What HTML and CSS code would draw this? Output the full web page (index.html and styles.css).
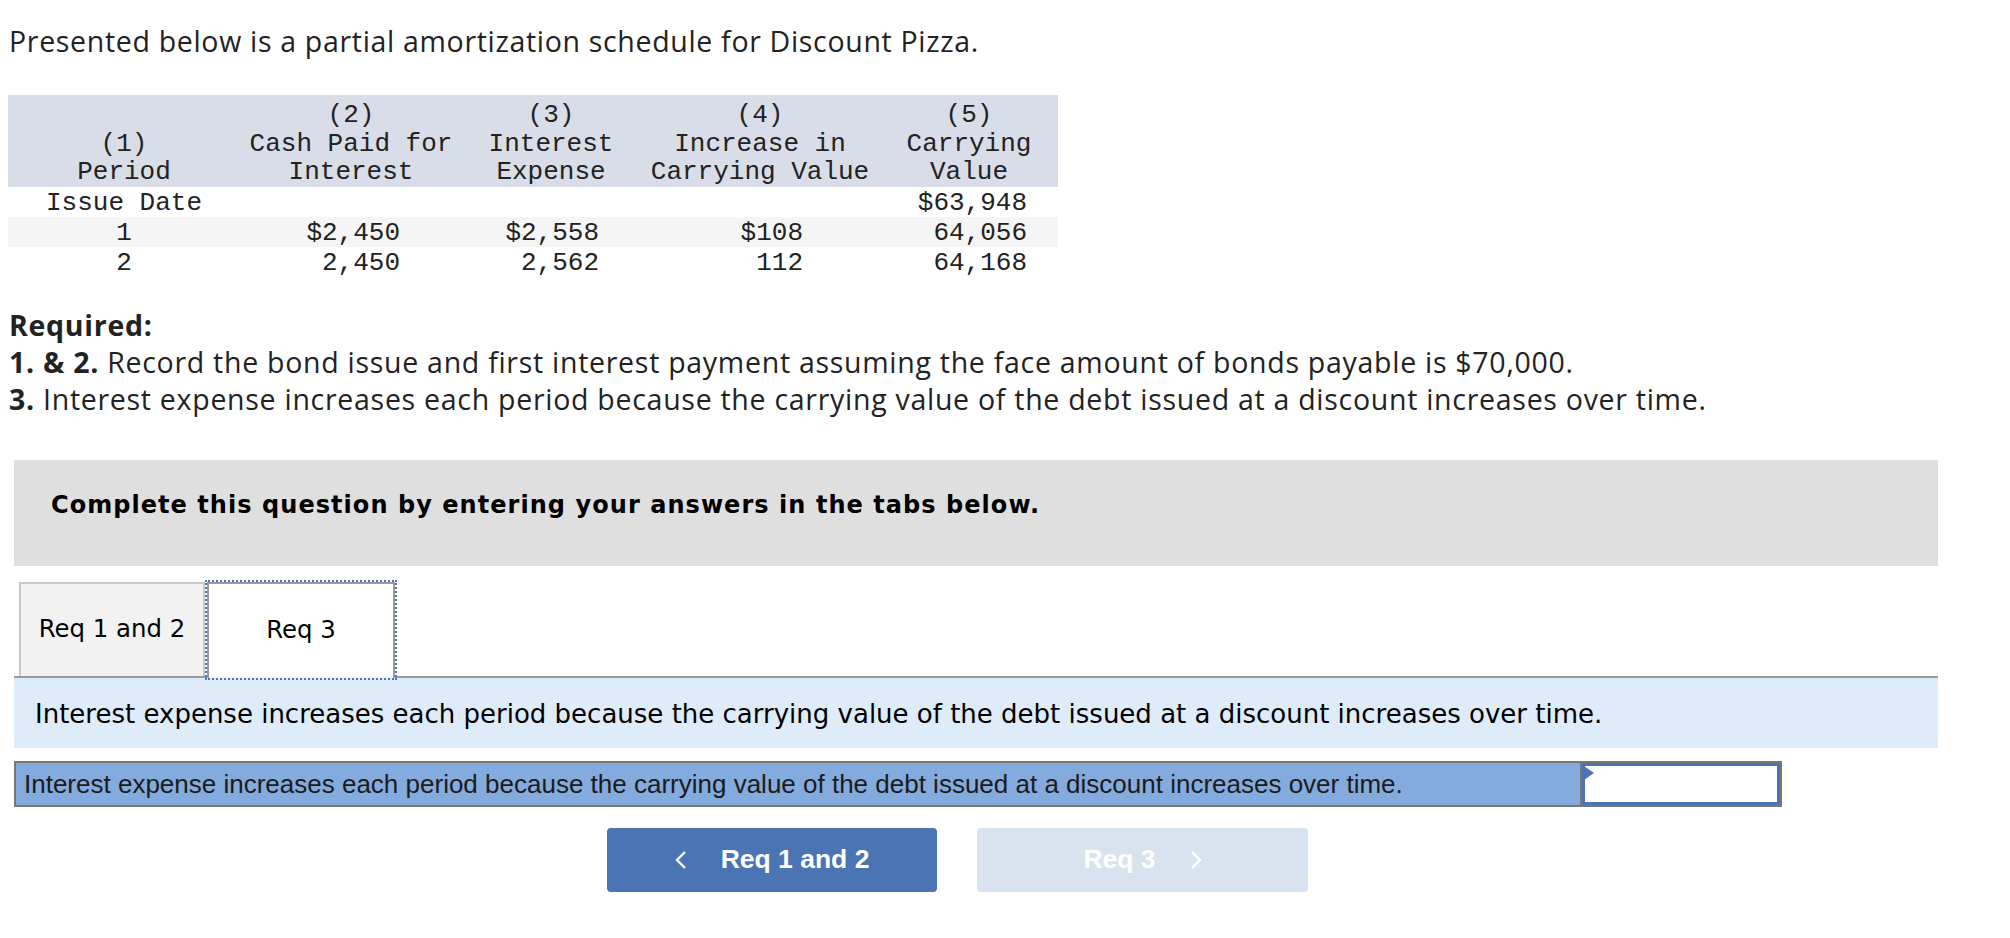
FILE: index.html
```html
<!DOCTYPE html>
<html>
<head>
<meta charset="utf-8">
<link rel="stylesheet" href="styles.css">
</head>
<body>
<div class="page">
  <p class="intro">Presented below is a partial amortization schedule for Discount Pizza.</p>

  <table class="sched">
    <colgroup>
      <col class="w1"><col class="w2"><col class="w3"><col class="w4"><col class="w5">
    </colgroup>
    <thead>
      <tr>
        <th>(1)<br>Period</th>
        <th>(2)<br>Cash Paid for<br>Interest</th>
        <th>(3)<br>Interest<br>Expense</th>
        <th>(4)<br>Increase in<br>Carrying Value</th>
        <th>(5)<br>Carrying<br>Value</th>
      </tr>
    </thead>
    <tbody>
      <tr>
        <td class="c1">Issue Date</td>
        <td class="c2"></td>
        <td class="c3"></td>
        <td class="c4"></td>
        <td class="c5">$63,948</td>
      </tr>
      <tr class="stripe">
        <td class="c1">1</td>
        <td class="c2">$2,450</td>
        <td class="c3">$2,558</td>
        <td class="c4">$108</td>
        <td class="c5">64,056</td>
      </tr>
      <tr>
        <td class="c1">2</td>
        <td class="c2">2,450</td>
        <td class="c3">2,562</td>
        <td class="c4">112</td>
        <td class="c5">64,168</td>
      </tr>
    </tbody>
  </table>

  <div class="req">
    <p class="req-title">Required:</p>
    <p><b>1. &amp; 2.</b> Record the bond issue and first interest payment assuming the face amount of bonds payable is $70,000.</p>
    <p><b>3.</b> Interest expense increases each period because the carrying value of the debt issued at a discount increases over time.</p>
  </div>

  <div class="notice">Complete this question by entering your answers in the tabs below.</div>

  <div class="tabs">
    <div class="tab">Req 1 and 2</div>
    <div class="tab active">Req 3</div>
  </div>
  <div class="panel">Interest expense increases each period because the carrying value of the debt issued at a discount increases over time.</div>

  <div class="answer">
    <div class="answer-text">Interest expense increases each period because the carrying value of the debt issued at a discount increases over time.</div>
    <div class="answer-input"><span class="flag"></span></div>
  </div>

  <div class="nav">
    <button class="btn prev">
      <svg class="chev" width="12" height="18" viewBox="0 0 12 18"><polyline points="10,1 2,9 10,17" fill="none" stroke="#fff" stroke-width="2.4"/></svg>
      <span>Req 1 and 2</span>
    </button>
    <button class="btn next">
      <span>Req 3</span>
      <svg class="chev" width="12" height="18" viewBox="0 0 12 18"><polyline points="2,1 10,9 2,17" fill="none" stroke="#fff" stroke-width="2.4"/></svg>
    </button>
  </div>
</div>
</body>
</html>
```

FILE: styles.css
```css
html, body {
  margin: 0;
  padding: 0;
  background: #fff;
}

.page {
  padding: 0 0 40px 8px;
  color: #222;
  font-family: "Open Sans", Lato, "Liberation Sans", sans-serif;
}

.intro {
  margin: 23px 0 0 1px;
  font-size: 28.5px;
  letter-spacing: 0.68px;
  line-height: 36px;
  color: #222;
}

/* schedule table */
.sched {
  margin-top: 36px;
  border-collapse: collapse;
  table-layout: fixed;
  width: 1050px;
  font-family: "Liberation Mono", "Courier New", monospace;
  font-size: 26px;
  color: #222;
}
.w1 { width: 232px; }
.w2 { width: 222px; }
.w3 { width: 178px; }
.w4 { width: 240px; }
.w5 { width: 178px; }

.sched th {
  background: #d9dde7;
  font-weight: normal;
  text-align: center;
  vertical-align: bottom;
  line-height: 28.5px;
  padding: 6px 0 0;
  white-space: nowrap;
}
.sched td {
  line-height: 28px;
  padding: 2px 0 0;
  white-space: nowrap;
}
.sched .stripe td { background: #f5f5f5; }
.sched .c1 { text-align: center; }
.sched .c2 { text-align: right; padding-right: 62px; }
.sched .c3 { text-align: right; padding-right: 41px; }
.sched .c4 { text-align: right; padding-right: 77px; }
.sched .c5 { text-align: right; padding-right: 31px; }

/* required */
.req {
  margin-top: 30px;
  margin-left: 1px;
  font-size: 28.5px;
  letter-spacing: 0.72px;
  line-height: 37px;
  color: #222;
}
.req p { margin: 0; }
.req-title { font-weight: bold; }
.req b { font-weight: bold; }

/* notice box */
.notice {
  margin: 42px 0 0 6px;
  width: 1850px;
  padding: 32px 37px 48px;
  background: #dfdfdf;
  font-family: "DejaVu Sans", Verdana, sans-serif;
  font-weight: bold;
  font-size: 24px;
  letter-spacing: 1.05px;
  line-height: 26px;
  color: #000;
}

/* tabs */
.tabs {
  display: flex;
  margin: 16px 0 0 11px;
  height: 94px;
}
.tab {
  box-sizing: border-box;
  width: 186px;
  height: 94px;
  background: #f2f2f2;
  border: 2px solid #c9c9c9;
  border-bottom: none;
  display: flex;
  align-items: center;
  justify-content: center;
  font-family: "DejaVu Sans", Verdana, sans-serif;
  font-size: 24.4px;
  color: #000;
  padding-bottom: 2px;
}
.tab.active {
  width: 188px;
  margin-left: 2px;
  background: #fff;
  border-color: #9a9a9a;
  outline: 2px dotted #4a74b5;
  outline-offset: 0;
  position: relative;
  z-index: 1;
  height: 96px;
}

.panel {
  margin-left: 6px;
  width: 1882px;
  border-top: 2px solid #999;
  background: #deebf8;
  padding: 23px 21px 21px;
  font-family: "DejaVu Sans", Verdana, sans-serif;
  font-size: 26px;
  line-height: 26px;
  color: #000;
}

/* answer row */
.answer {
  margin: 13px 0 0 6px;
  width: 1764px;
  height: 42px;
  display: flex;
  border: 2px solid #777;
}
.answer-text {
  flex: 1;
  background: #84abde;
  padding-left: 8px;
  font-family: "Liberation Sans", Arial, sans-serif;
  font-size: 26px;
  line-height: 42px;
  color: #1b1b1b;
  white-space: nowrap;
  overflow: hidden;
}
.answer-input {
  width: 198px;
  border-left: 2px solid #777;
  background: #fff;
  box-shadow: inset 0 0 0 3px #4a74b5;
  position: relative;
}
.flag {
  position: absolute;
  left: 2px;
  top: 3px;
  width: 0;
  height: 0;
  border-top: 7px solid transparent;
  border-bottom: 7px solid transparent;
  border-left: 10px solid #4a74b5;
}

/* nav buttons */
.nav {
  display: flex;
  gap: 40px;
  margin: 21px 0 0 599px;
}
.btn {
  width: 331px;
  height: 64px;
  border: none;
  border-radius: 4px;
  display: flex;
  align-items: center;
  justify-content: center;
  gap: 34px;
  font-family: "Liberation Sans", Arial, sans-serif;
  font-weight: bold;
  font-size: 26.5px;
  color: #fff;
  padding: 0;
}
.btn.prev {
  width: 330px;
  background: #4a74b3;
}
.btn.next {
  background: #d9e3f0;
}
.chev { display: block; }
```
